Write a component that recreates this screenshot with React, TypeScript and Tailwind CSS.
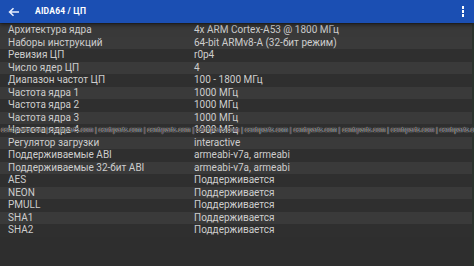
import React from "react";

const rows: [string, string][] = [
  ["Архитектура ядра", "4x ARM Cortex-A53 @ 1800 МГц"],
  ["Наборы инструкций", "64-bit ARMv8-A (32-бит режим)"],
  ["Ревизия ЦП", "r0p4"],
  ["Число ядер ЦП", "4"],
  ["Диапазон частот ЦП", "100 - 1800 МГц"],
  ["Частота ядра 1", "1000 МГц"],
  ["Частота ядра 2", "1000 МГц"],
  ["Частота ядра 3", "1000 МГц"],
  ["Частота ядра 4", "1000 МГц"],
  ["Регулятор загрузки", "interactive"],
  ["Поддерживаемые ABI", "armeabi-v7a, armeabi"],
  ["Поддерживаемые 32-бит ABI", "armeabi-v7a, armeabi"],
  ["AES", "Поддерживается"],
  ["NEON", "Поддерживается"],
  ["PMULL", "Поддерживается"],
  ["SHA1", "Поддерживается"],
  ["SHA2", "Поддерживается"],
];

export default function App() {
  return (
    <div className="relative w-[474px] h-[266px] overflow-hidden bg-[#2e2e2e] font-['Roboto',sans-serif]">
      {/* Toolbar */}
      <div className="relative z-10 flex items-center h-[23px] bg-[#1b4fb3] shadow-[0_2px_4px_rgba(0,0,0,0.45)]">
        <svg width="12" height="10" viewBox="0 0 12 10" className="ml-[8px]">
          <path d="M11 5H2M5.5 1.2 1.6 5l3.9 3.8" stroke="#e8eefc" strokeWidth="1.6" fill="none" />
        </svg>
        <span className="ml-[15px] text-[8.5px] font-bold text-white tracking-[0.2px]">AIDA64 / ЦП</span>
        <div className="ml-auto mr-[10px] flex flex-col gap-[1.5px]">
          <span className="block w-[2.5px] h-[2.5px] bg-white" />
          <span className="block w-[2.5px] h-[2.5px] bg-white" />
          <span className="block w-[2.5px] h-[2.5px] bg-white" />
        </div>
      </div>

      {/* Rows */}
      <div className="pt-[1px]">
        {rows.map(([k, v], i) => (
          <div
            key={k}
            className={`flex items-center h-[12.5px] text-[10px] leading-none text-[#cdcdcd] ${
              i === 0 ? "bg-[#393939]" : i % 2 === 1 ? "bg-[#3a3a3a]" : "bg-[#2f2f2f]"
            }`}
          >
            <span className="w-[194px] pl-[8px] shrink-0">{k}</span>
            <span>{v}</span>
          </div>
        ))}
      </div>

      <div className="absolute top-[23px] bottom-0 right-0 w-[2px] bg-[#2a332c]" />

      {/* Watermark */}
      <div
        className="absolute left-[1px] top-[125px] origin-left scale-x-[0.82] whitespace-nowrap text-[8px] leading-[10px] text-black font-['Liberation_Sans',sans-serif]"
        style={{ textShadow: "0 0 1px #fff, 0 0 1px #fff" }}
      >
        {Array.from({ length: 11 }).map(() => "centrparts.com").join(" | ")}
      </div>
    </div>
  );
}
